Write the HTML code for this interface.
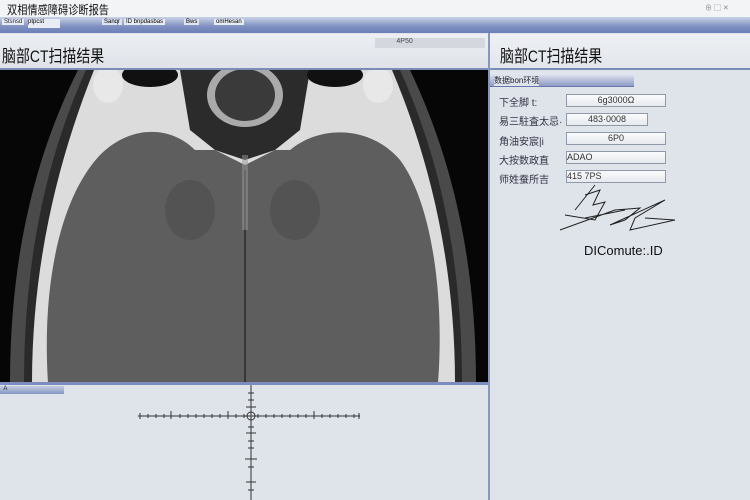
<!DOCTYPE html><html><head><meta charset="utf-8"><style>
body{margin:0;width:750px;height:500px;overflow:hidden;background:#dfe3ea;font-family:"Liberation Sans","Noto Sans CJK SC",sans-serif;position:relative}
.a{position:absolute}
.f{border:1px solid #8f99a8;background:linear-gradient(#fafbfc,#e6e9ee);font-size:9px;color:#333;height:11px;line-height:11px;text-align:center}
.l{font-size:10px;color:#334;}
.t{font-size:17px;color:#111;transform:scaleX(0.82);transform-origin:0 0;white-space:nowrap}
</style></head><body>
<div class="a" style="left:0;top:0;width:750px;height:17px;background:#f3f4f6;border-bottom:1px solid #ccd"></div>
<div class="a" style="left:7px;top:1px;font-size:12px;color:#111;transform:scaleX(0.85);transform-origin:0 0">双相情感障碍诊断报告</div>
<div class="a" style="left:705px;top:3px;font-size:7px;color:#888">⊕ ▢ ✕</div>
<div class="a" style="left:0;top:17px;width:750px;height:16px;background:linear-gradient(#c9d2e6,#7e8fc0 60%,#6b7fb6)"></div>
<div class="a" style="left:2px;top:19px;font-size:6px;color:#223;background:#e8ecf4;padding:0 2px">Stsnsd</div>
<div class="a" style="left:28px;top:19px;width:32px;height:9px;background:#e8ecf4;font-size:6px">ptpcst</div>
<div class="a" style="left:102px;top:19px;font-size:6px;background:#dde3f0;padding:0 2px">Sanqr</div>
<div class="a" style="left:124px;top:19px;font-size:6px;background:#e8ecf4;padding:0 2px">ID bnpdasbas</div>
<div class="a" style="left:184px;top:19px;font-size:6px;background:#dde3f0;padding:0 2px">Bws</div>
<div class="a" style="left:214px;top:19px;font-size:6px;background:#e8ecf4;padding:0 2px">omHesan</div>
<div class="a" style="left:0;top:34px;width:488px;height:34px;background:linear-gradient(#eceef2,#dfe3e9);border-bottom:2px solid #7b8cb8"></div>
<div class="a t" style="left:2px;top:42px">脑部CT扫描结果</div>
<div class="a" style="left:375px;top:38px;width:110px;height:10px;background:#d4d8de;font-size:7px;color:#445">&nbsp;&nbsp;&nbsp;&nbsp;&nbsp;&nbsp;&nbsp;&nbsp;&nbsp;&nbsp;&nbsp;4P50</div>
<div class="a" style="left:488px;top:33px;width:2px;height:467px;background:#8896bb"></div>
<div class="a" style="left:490px;top:34px;width:260px;height:34px;background:linear-gradient(#eef0f3,#e2e6ec);border-bottom:2px solid #7b8cb8"></div>
<div class="a t" style="left:500px;top:42px">脑部CT扫描结果</div>
<div class="a" style="left:490px;top:73px;width:144px;height:13px;background:linear-gradient(#e8ebf2,#8d9bc6);border-bottom:1px solid #6677aa"></div>
<div class="a" style="left:494px;top:75px;font-size:8px;color:#223;background:#dfe3ec">数据bon环境</div>
<div class="a l" style="left:499px;top:94px">下全脚 t:</div><div class="a f" style="left:566px;top:94px;width:98px">6g3000Ω</div>
<div class="a l" style="left:499px;top:113px">易三駐査太忌·</div><div class="a f" style="left:566px;top:113px;width:80px">483·0008</div>
<div class="a l" style="left:499px;top:133px">角油安宸|i</div><div class="a f" style="left:566px;top:132px;width:98px">6P0</div>
<div class="a l" style="left:499px;top:152px">大按数政直</div><div class="a f" style="left:566px;top:151px;width:98px;text-align:left">ADAO</div>
<div class="a l" style="left:499px;top:171px">师姓蚕所吉</div><div class="a f" style="left:566px;top:170px;width:98px;text-align:left">415 7PS</div>
<svg class="a" style="left:555px;top:180px" width="130" height="60"><path d="M40 5 L20 30 M30 15 L45 10 L38 25 L50 22 L40 40 L10 35 M5 50 L60 30 L85 28 L70 40 L55 45 L110 20 L80 38 L75 50 L120 40 L90 38 M30 38 L70 30" stroke="#222" fill="none" stroke-width="1"/></svg>
<div class="a" style="left:584px;top:243px;font-size:13px;color:#111">DIComute:.ID</div>
<svg class="a" style="left:0;top:70px" width="488" height="313">
<rect width="488" height="313" fill="#060606"/>
<path d="M78 0 C38 80 10 180 10 313 H476 C476 180 448 80 410 0 Z" fill="#4a4a4a"/>
<path d="M86 0 C50 80 24 180 24 313 H462 C462 180 436 80 400 0 Z" fill="#2a2a2a"/>
<path d="M94 0 C60 85 32 190 32 313 H455 C455 190 428 85 392 0 Z" fill="#dcdcdc"/>
<path d="M48 313 C42 220 58 130 100 85 C130 55 170 55 195 80 L215 80 L245 95 L275 80 L290 80 C320 55 370 55 400 90 C430 130 445 220 438 313 Z" fill="#5e5e5e"/>
<path d="M180 0 H310 L300 60 L275 80 L245 90 L215 80 L190 60 Z" fill="#2b2b2b"/>
<ellipse cx="245" cy="25" rx="38" ry="32" fill="#aaa"/>
<ellipse cx="245" cy="25" rx="30" ry="26" fill="#3a3a3a"/>
<ellipse cx="108" cy="15" rx="15" ry="18" fill="#e8e8e8"/>
<ellipse cx="378" cy="15" rx="15" ry="18" fill="#e8e8e8"/>
<ellipse cx="150" cy="5" rx="28" ry="12" fill="#111"/>
<ellipse cx="335" cy="5" rx="28" ry="12" fill="#111"/>
<path d="M245 100 L245 313" stroke="#2a2a2a" stroke-width="1.5"/>
<path d="M245 85 L245 160" stroke="#999" stroke-width="6" opacity="0.5"/>
<ellipse cx="190" cy="140" rx="25" ry="30" fill="#4c4c4c" opacity="0.6"/>
<ellipse cx="295" cy="140" rx="25" ry="30" fill="#4c4c4c" opacity="0.6"/>
</svg>
<div class="a" style="left:0;top:382px;width:488px;height:3px;background:#7a8cc0"></div>
<div class="a" style="left:0;top:386px;width:64px;height:8px;background:linear-gradient(#c5cde0,#8595c3);font-size:6px;color:#223">&nbsp;&nbsp;A</div>
<svg class="a" style="left:0;top:385px" width="488" height="115">
<g stroke="#333" fill="none" stroke-width="1">
<path d="M138 31 H360 M251 0 V115"/>
<circle cx="251" cy="31" r="4"/>
<path d="M140 28v6M148 29v4M156 29v4M164 29v4M171 26v8M180 29v4M188 29v4M196 29v4M204 29v4M212 29v4M220 29v4M228 26v8M236 29v4M244 29v4M258 29v4M266 29v4M274 29v4M282 29v4M290 29v4M298 29v4M306 29v4M314 26v8M322 29v4M330 29v4M338 29v4M346 29v4M354 29v4M359 28v6"/>
<path d="M248 8h6M248 15h6M246 22h10M248 42h6M246 48h10M248 56h6M248 63h6M245 74h12M248 82h6M246 97h10M248 105h6"/>
</g></svg>
</body></html>
